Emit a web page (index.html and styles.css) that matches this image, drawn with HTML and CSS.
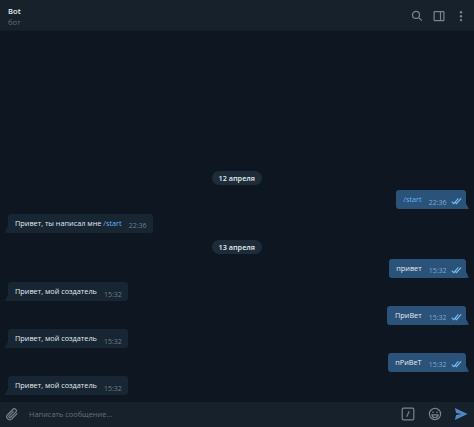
FILE: index.html
```html
<!DOCTYPE html>
<html lang="ru">
<head>
    <meta charset="UTF-8">
    <meta name="viewport" content="width=device-width, initial-scale=1.0">
    <title>Bot</title>
    <link rel="stylesheet" href="styles.css">
</head>
<body>

    <svg width="0" height="0" class="sprite">
        <symbol id="checks" viewBox="0 0 11 8">
            <path d="M0.7 4.6 L2.8 6.7 L7.4 1.4 M4.4 5.7 L5.4 6.7 L10.2 1.4" fill="none" stroke="currentColor" stroke-width="1.1"/>
        </symbol>
    </svg>

    <div class="chat">
        <header class="header">
            <div class="info">
                <div class="name">Bot</div>
                <div class="status">бот</div>
            </div>
            <div class="actions">
                <svg class="icon" width="12" height="12" viewBox="0 0 12 12">
                    <circle cx="5" cy="4.9" r="3.5"/>
                    <path d="M7.5 7.4 L10.8 10.6"/>
                </svg>
                <svg class="icon" width="12" height="12" viewBox="0 0 12 12">
                    <rect x="1.1" y="1.6" width="9.8" height="9" rx="0.6"/>
                    <path d="M7.5 1.6 V10.6"/>
                </svg>
                <svg class="icon dots" width="4" height="12" viewBox="0 0 4 12">
                    <circle cx="2" cy="2.3" r="1.2"/>
                    <circle cx="2" cy="6.2" r="1.2"/>
                    <circle cx="2" cy="10.1" r="1.2"/>
                </svg>
            </div>
        </header>

        <main class="messages">
            <div class="date">12 апреля</div>
            <div class="message out"><span class="text command">/start</span><span class="time">22:36</span><svg class="checks"><use href="#checks"/></svg></div>
            <div class="message in"><span class="text">Привет, ты написал мне <span class="command">/start</span></span><span class="time">22:36</span></div>
            <div class="date">13 апреля</div>
            <div class="message out"><span class="text">привет</span><span class="time">15:32</span><svg class="checks"><use href="#checks"/></svg></div>
            <div class="message in"><span class="text">Привет, мой создатель</span><span class="time">15:32</span></div>
            <div class="message out"><span class="text">ПриВет</span><span class="time">15:32</span><svg class="checks"><use href="#checks"/></svg></div>
            <div class="message in"><span class="text">Привет, мой создатель</span><span class="time">15:32</span></div>
            <div class="message out"><span class="text">пРиВеТ</span><span class="time">15:32</span><svg class="checks"><use href="#checks"/></svg></div>
            <div class="message in"><span class="text">Привет, мой создатель</span><span class="time">15:32</span></div>
        </main>

        <footer class="composer">
            <svg class="icon" width="14" height="14" viewBox="0 0 14 14">
                <path d="M12.3 6.3 L6.9 11.9 C4.2 14.4 0 10.7 2.5 7.9 L7.9 2.3 C9.8 0.5 12.6 3.2 10.8 5.1 L5.8 10.2 C4.6 11.3 3.2 9.7 4.3 8.6 L8.6 4.2"/>
            </svg>
            <div class="placeholder">Написать сообщение...</div>
            <svg class="icon" width="14" height="14" viewBox="0 0 14 14">
                <rect x="1.2" y="1.2" width="11.6" height="11.6" rx="1.4"/>
                <path d="M8.3 4.3 L5.7 9.7"/>
            </svg>
            <svg class="icon smile" width="14" height="14" viewBox="0 0 14 14">
                <circle cx="7" cy="7" r="5.6"/>
                <path d="M3.9 7.8 H10.1 C9.4 11.4 4.6 11.4 3.9 7.8 Z"/>
                <circle class="eye" cx="5" cy="5.3" r="0.8"/>
                <circle class="eye" cx="9" cy="5.3" r="0.8"/>
            </svg>
            <svg class="send" width="14" height="14" viewBox="0 0 14 14">
                <path d="M0.8 1 L13.6 7 L0.8 13 L2.2 8 L7.5 7 L2.2 6 Z"/>
            </svg>
        </footer>
    </div>

</body>
</html>
```
FILE: styles.css
```css
body {
    margin: 0;
    background-color: #0e1621;
    font-family: "Open Sans", "Noto Sans", sans-serif;
    font-size: 7.3px;
    color: #e4ebf1;
}
.sprite {
    position: absolute;
}
.chat {
    display: flex;
    flex-direction: column;
    height: 100vh;
    overflow: hidden;
}
.header {
    display: flex;
    justify-content: space-between;
    align-items: center;
    box-sizing: border-box;
    height: 31px;
    padding: 0 11px 0 8px;
    background-color: #17212b;
    border-bottom: 1px solid #121b26;
}
.info {
    padding-top: 3px;
    font-size: 7.6px;
}
.name {
    font-weight: 600;
    line-height: 11px;
}
.status {
    color: #5f6f7e;
    line-height: 11px;
}
.actions {
    display: flex;
    align-items: center;
    gap: 10px;
    padding-top: 1px;
}
.actions .dots {
    margin-left: 4px;
}
.icon {
    flex: none;
    fill: none;
    stroke: #768591;
    stroke-width: 1.2;
}
.dots,
.smile .eye {
    fill: #768591;
    stroke: none;
}
.messages {
    flex: 1;
    display: flex;
    flex-direction: column;
    justify-content: flex-end;
    gap: 4.5px;
    padding: 0 8px 6.75px 7.5px;
}
.date {
    align-self: center;
    box-sizing: border-box;
    height: 14px;
    line-height: 14px;
    padding: 0 7px;
    margin-bottom: 0.5px;
    border-radius: 7px;
    background-color: #1e2c3a;
    font-weight: 600;
}
.message {
    position: relative;
    display: flex;
    box-sizing: border-box;
    height: 19px;
    padding: 0 6px 0 7.5px;
    border-radius: 3px;
    line-height: 18px;
    white-space: nowrap;
}
.message + .date {
    margin-top: 2.5px;
}
.message::after {
    content: "";
    position: absolute;
    bottom: 0;
    width: 6px;
    height: 6px;
}
.in {
    align-self: flex-start;
    background-color: #182533;
    border-bottom-left-radius: 0;
}
.in::after {
    left: -3px;
    background-color: #182533;
    clip-path: polygon(100% 0, 50% 0, 0 100%, 100% 100%);
}
.out {
    align-self: flex-end;
    padding-right: 4.5px;
    background-color: #2b5278;
    border-bottom-right-radius: 0;
}
.out::after {
    right: -3px;
    background-color: #2b5278;
    clip-path: polygon(0 0, 50% 0, 100% 100%, 0 100%);
}
.command {
    color: #6ab3f3;
}
.time {
    margin-left: 7px;
    padding-top: 3.5px;
    font-size: 7px;
    color: #6d7f8f;
}
.out .time {
    color: #7da8d3;
}
.checks {
    width: 11px;
    height: 8px;
    margin: 7px 0 0 4px;
    color: #74c0f5;
}
.composer {
    display: flex;
    align-items: center;
    box-sizing: border-box;
    height: 25px;
    padding: 0 6px 1px 5px;
    background-color: #17212b;
}
.placeholder {
    flex: 1;
    margin-left: 10px;
    font-size: 7.4px;
    color: #62717f;
}
.smile {
    margin: 0 12.5px 0 12.5px;
}
.send {
    fill: #5288c1;
}
```
